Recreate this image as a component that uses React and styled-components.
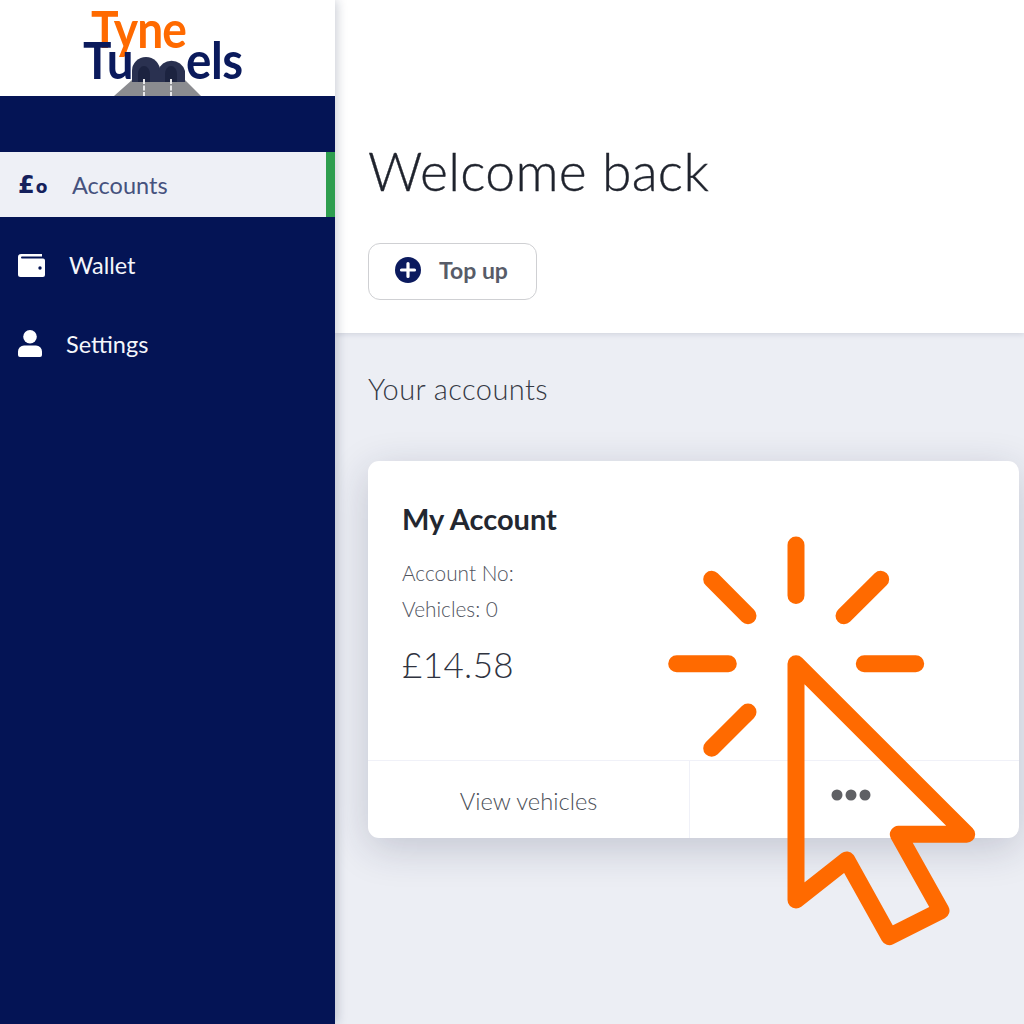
import React from "react";
import styled, { createGlobalStyle } from "styled-components";

const Global = createGlobalStyle`
  html, body { margin: 0; padding: 0; background: #eceef4; }
  * { box-sizing: border-box; }
  body { font-family: "Lato", "Open Sans", sans-serif; }
`;
const Page = styled.div`
  position: relative; width: 1024px; height: 1024px; overflow: hidden;
  display: grid; grid-template-columns: 335px 1fr; background: #eceef4;
`;
const Sidebar = styled.aside`
  background: #041455; display: flex; flex-direction: column;
  box-shadow: 2px 0 10px rgba(20,30,70,.22); z-index: 2;
`;
const LogoBar = styled.div`
  position: relative; height: 96px; background: #fff; display: flex;
  flex-direction: column; align-items: flex-start; padding: 11px 0 0 83px; filter: blur(.5px);
`;
const LogoTyne = styled.span`
  font: 700 48px/38px "Lato", sans-serif; color: #ff6a00; margin-left: 8px; letter-spacing: -1px;
  transform: scale(.96, 1.06); transform-origin: left bottom;
`;
const LogoTunnels = styled.span`
  font: 700 48px/36px "Lato", sans-serif; color: #0a1a5c; margin-top: -6px; letter-spacing: -.4px;
  transform: scale(.99, 1.06); transform-origin: left bottom;
`;
const TunnelArt = styled.svg`position: absolute; left: 110px; top: 50px; width: 100px; height: 46px;`;
const Nav = styled.nav`display: flex; flex-direction: column; padding-top: 56px;`;
const NavRow = styled.div`
  display: flex; align-items: center; gap: ${p => p.$gap}px; padding-left: 18px;
  height: ${p => p.$active ? 65 : 79}px; margin-bottom: ${p => p.$active ? 8 : 0}px;
  background: ${p => p.$active ? "#eef0f6" : "transparent"};
  border-right: ${p => p.$active ? "9px solid #2e9e4f" : "none"};
  color: ${p => p.$active ? "#46527e" : "#f4f6fb"};
  font-size: 23.5px; font-weight: 400;
`;
const PoundIcon = styled.span`
  display: flex; align-items: baseline; width: 28px; color: #14205c;
  font: 700 24px/1 "DejaVu Sans", sans-serif;
`;
const PoundSmall = styled.span`font-size: 17px; margin-left: 1px;`;
const Main = styled.main`display: flex; flex-direction: column;`;
const Header = styled.header`
  height: 333px; background: #fff; padding: 138px 0 0 33px;
  box-shadow: 0 1px 6px rgba(20,30,70,.14);
`;
const Title = styled.h1`
  margin: 0; font-size: 53.5px; line-height: 64px; font-weight: 300; color: #1f232d; letter-spacing: .3px;
  -webkit-text-stroke: .35px #1f232d;
`;
const TopUp = styled.button`
  display: flex; align-items: center; gap: 18px; margin-top: 41px; width: 169px; height: 57px;
  padding: 0 0 4px 26px; background: #fff; border: 1.5px solid #cfd0d3; border-radius: 12px;
  font: 700 23px "Lato", sans-serif; color: #575c68;
`;
const Body = styled.section`padding: 39px 5px 0 33px; display: flex; flex-direction: column;`;
const Section = styled.h2`
  margin: 0; font-size: 29px; line-height: 34px; font-weight: 300; color: #353944; letter-spacing: .4px;
`;
const Card = styled.article`
  margin-top: 55px; height: 377px; background: #fff; border-radius: 11px; display: flex; flex-direction: column;
  box-shadow: 0 10px 40px rgba(30,35,70,.2);
`;
const CardBody = styled.div`flex: 1; padding: 39px 0 0 34px; display: flex; flex-direction: column;`;
const CardTitle = styled.h3`margin: 0; font-size: 29px; line-height: 38px; font-weight: 700; color: #232730;`;
const Meta = styled.p`margin: 0; font-size: 20.8px; line-height: 36px; font-weight: 300; color: #50545e; &:first-of-type { margin-top: 17px; }`;
const Balance = styled.div`font-size: 35px; line-height: 44px; margin-top: 15px; font-weight: 300; color: #2f333f; letter-spacing: .4px;`;
const CardFoot = styled.div`height: 78px; display: grid; grid-template-columns: 321px 1fr; border-top: 1.5px solid #f0f1f8;`;
const FootAction = styled.div`
  display: flex; align-items: center; justify-content: center; font-size: 23.7px; font-weight: 300; color: #4c5058; padding-top: 2px;
  & + & { border-left: 1.5px solid #f0f1f8; padding: 0 8px 10px 0; }
`;
const Pointer = styled.svg`position: absolute; inset: 0; width: 1024px; height: 1024px; z-index: 5; pointer-events: none;`;

export default function App() {
  return (
    <Page>
      <Global />
      <Sidebar>
        <LogoBar>
          <LogoTyne>Tyne</LogoTyne>
          <LogoTunnels>Tunnels</LogoTunnels>
          <TunnelArt viewBox="110 50 100 46">
            <path d="M114 96 L132 80 H185 L201 96Z" fill="#8b8c90" />
            <rect x="131" y="50" width="55" height="30" fill="#fff" />
            <path d="M132 82 V71 a14 14 0 0 1 28 0 V82Z" fill="#2a3150" />
            <path d="M158 82 V71 a14 14 0 0 1 27 0 V82Z" fill="#2a3150" />
            <path d="M138 82 V74 a6 8 0 0 1 12 0 V82Z M165 82 V74 a6 8 0 0 1 12 0 V82Z" fill="#1c2340" />
            <path d="M144 79 V96 M171 79 V96" stroke="#e8e8ea" strokeWidth="2" strokeDasharray="5 1.5" />
          </TunnelArt>
        </LogoBar>
        <Nav>
          <NavRow $active $gap={26}><PoundIcon>£<PoundSmall>o</PoundSmall></PoundIcon>Accounts</NavRow>
          <NavRow $gap={24}>
            <svg width="27" height="24" viewBox="0 0 27 24" fill="#fff">
              <path d="M3 1h21v2.4H4a1 1 0 0 0 0 2h21a2 2 0 0 1 2 2V22a2 2 0 0 1-2 2H2.500A2.500 2.500 0 0 1 0 21.500V4a3 3 0 0 1 3-3Z" />
              <circle cx="22" cy="15" r="1.700" fill="#041455" />
            </svg>
            Wallet
          </NavRow>
          <NavRow $gap={24}>
            <svg width="24" height="27" viewBox="0 0 24 27" fill="#fff">
              <circle cx="12" cy="6.800" r="6.800" />
              <path d="M6 15.500h12a6 6 0 0 1 6 6V25a2 2 0 0 1-2 2H2a2 2 0 0 1-2-2v-3.500a6 6 0 0 1 6-6Z" />
            </svg>
            Settings
          </NavRow>
        </Nav>
      </Sidebar>
      <Main>
        <Header>
          <Title>Welcome back</Title>
          <TopUp>
            <svg width="26" height="26" viewBox="0 0 26 26">
              <circle cx="13" cy="13" r="13" fill="#0b1a5e" />
              <path d="M13 6.500v13M6.500 13h13" stroke="#fff" strokeWidth="3.200" strokeLinecap="round" />
            </svg>
            Top up
          </TopUp>
        </Header>
        <Body>
          <Section>Your accounts</Section>
          <Card>
            <CardBody>
              <CardTitle>My Account</CardTitle>
              <Meta>Account No:</Meta>
              <Meta>Vehicles: 0</Meta>
              <Balance>£14.58</Balance>
            </CardBody>
            <CardFoot>
              <FootAction>View vehicles</FootAction>
              <FootAction>
                <svg width="40" height="12" viewBox="0 0 40 12" fill="#5f6064">
                  <circle cx="6" cy="6" r="5.500" /><circle cx="20" cy="6" r="5.500" /><circle cx="34" cy="6" r="5.500" />
                </svg>
              </FootAction>
            </CardFoot>
          </Card>
        </Body>
      </Main>
      <Pointer viewBox="0 0 1024 1024" fill="none" stroke="#ff6a00" strokeWidth="17" strokeLinecap="round" strokeLinejoin="round">
        <path d="M796 545V595.500M711.700 579.300L748 615.700M880.700 579.300L844 615.700M676.700 663.700H728.300M864.300 663.700H915.700M748 712L711.700 748.300" />
        <path d="M796 663.700V900L846.700 860L889.300 936.700L941 910.700L898.300 834.300H966.700Z" />
      </Pointer>
    </Page>
  );
}
